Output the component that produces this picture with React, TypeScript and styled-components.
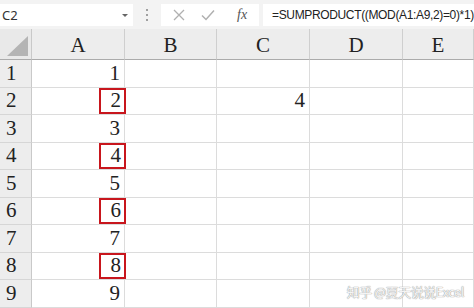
import styled, { createGlobalStyle } from 'styled-components';

const GlobalStyle = createGlobalStyle`
  html, body {
    margin: 0;
    padding: 0;
    background: #ffffff;
  }
  body {
    width: 474px;
    height: 308px;
    overflow: hidden;
    font-family: 'Liberation Serif', serif;
  }
`;

const Page = styled.div`
  width: 474px;
  height: 308px;
  overflow: hidden;
  position: relative;
  background: #fff;
`;

const FormulaBar = styled.div`
  display: flex;
  align-items: center;
  height: 29px;
  background: #f3f3f3;
  padding-top: 1px;
  box-sizing: border-box;
`;

const NameBox = styled.div`
  display: flex;
  align-items: center;
  justify-content: space-between;
  width: 133px;
  height: 22px;
  background: #fff;
  box-sizing: border-box;
  padding: 0 5px 0 2px;
  font-family: 'Noto Sans', sans-serif;
  font-size: 13px;
  color: #333;
`;

const Caret = styled.span`
  width: 0;
  height: 0;
  border-left: 3px solid transparent;
  border-right: 3px solid transparent;
  border-top: 3px solid #666;
`;

const Grip = styled.div`
  width: 28px;
  display: flex;
  flex-direction: column;
  align-items: center;
  gap: 3px;

  span {
    width: 2px;
    height: 2px;
    background: #a0a0a0;
  }
`;

const IconBox = styled.div`
  display: flex;
  align-items: center;
  width: 98px;
  height: 22px;
  background: #fff;
  box-sizing: border-box;
  padding-left: 12px;
  gap: 16px;
`;

const FxLabel = styled.span`
  font-family: 'Liberation Serif', serif;
  font-style: italic;
  font-size: 14px;
  color: #555;
  margin-left: 6px;
`;

const FormulaInput = styled.div`
  flex: 1;
  height: 22px;
  margin-left: 4px;
  background: #fff;
  display: flex;
  align-items: center;
  padding-left: 9px;
  white-space: nowrap;
  overflow: hidden;
  font-family: 'Liberation Sans', sans-serif;
  font-size: 12px;
  letter-spacing: -0.35px;
  color: #222;
`;

const Sheet = styled.div`
  display: grid;
  grid-template-columns: 32px 93px 92px 93px 93px 1fr;
  grid-template-rows: 31px repeat(9, 27.5px);
`;

const Corner = styled.div`
  background: #e9e9e9;
  border-right: 1px solid #c9c9c9;
  border-bottom: 1px solid #ababab;
  display: flex;
  align-items: flex-end;
  justify-content: flex-end;
  padding: 0 3px 3px 0;
  box-sizing: border-box;
`;

const Triangle = styled.span`
  width: 0;
  height: 0;
  border-left: 21px solid transparent;
  border-bottom: 20px solid #b4b4b4;
`;

const ColHeader = styled.div`
  background: #ededed;
  border-right: 1px solid #cfcfcf;
  border-bottom: 1px solid #ababab;
  display: flex;
  align-items: center;
  justify-content: center;
  font-size: 21px;
  color: #222;
  padding-top: 2px;
  box-sizing: border-box;
`;

const RowHeader = styled.div`
  background: #ededed;
  border-right: 1px solid #c9c9c9;
  border-bottom: 1px solid #d6d6d6;
  display: flex;
  align-items: center;
  padding-left: 6px;
  font-size: 21px;
  color: #222;
  box-sizing: border-box;
`;

const Cell = styled.div`
  border-right: 1px solid #dcdcdc;
  border-bottom: 1px solid #dcdcdc;
  display: flex;
  align-items: center;
  justify-content: flex-end;
  padding-right: 4px;
  font-size: 21px;
  color: #222;
  box-sizing: border-box;
`;

const Value = styled.span<{ $marked?: boolean }>`
  display: inline-flex;
  align-items: center;
  justify-content: flex-end;
  box-sizing: border-box;
  height: ${(p) => (p.$marked ? '26px' : 'auto')};
  padding: ${(p) => (p.$marked ? '0 3px 0 10px' : '0')};
  margin-right: ${(p) => (p.$marked ? '-6px' : '0')};
  border: ${(p) => (p.$marked ? '2.5px solid #c8161d' : 'none')};
`;

const Watermark = styled.div`
  position: absolute;
  right: 10px;
  bottom: 7px;
  font-family: 'Noto Sans CJK SC', sans-serif;
  font-size: 13px;
  color: #f4f4f4;
  text-shadow: 0 0 1px #9a9a9a, 0 0 1px #9a9a9a;
  letter-spacing: -0.5px;
`;

const columns = ['A', 'B', 'C', 'D', 'E'];
const rows = [1, 2, 3, 4, 5, 6, 7, 8, 9];

const App = () => {
  return (
    <Page>
      <GlobalStyle />
      <FormulaBar>
        <NameBox>
          C2
          <Caret />
        </NameBox>
        <Grip>
          <span />
          <span />
          <span />
        </Grip>
        <IconBox>
          <svg width="12" height="12" viewBox="0 0 12 12">
            <path d="M1 1 L11 11 M11 1 L1 11" stroke="#b0b0b0" strokeWidth="1.3" fill="none" />
          </svg>
          <svg width="14" height="12" viewBox="0 0 14 12">
            <path d="M1 6.5 L5 10.5 L13 1.5" stroke="#b0b0b0" strokeWidth="1.5" fill="none" />
          </svg>
          <FxLabel>fx</FxLabel>
        </IconBox>
        <FormulaInput>=SUMPRODUCT((MOD(A1:A9,2)=0)*1)</FormulaInput>
      </FormulaBar>
      <Sheet>
        <Corner>
          <Triangle />
        </Corner>
        {columns.map((c) => (
          <ColHeader key={c}>{c}</ColHeader>
        ))}
        {rows.map((r) => (
          <>
            <RowHeader key={'h' + r}>{r}</RowHeader>
            <Cell key={'a' + r}>
              <Value $marked={r % 2 === 0}>{r}</Value>
            </Cell>
            <Cell key={'b' + r} />
            <Cell key={'c' + r}>{r === 2 ? 4 : ''}</Cell>
            <Cell key={'d' + r} />
            <Cell key={'e' + r} />
          </>
        ))}
      </Sheet>
      <Watermark>知乎 @夏天说说Excel</Watermark>
    </Page>
  );
};

export default App;
